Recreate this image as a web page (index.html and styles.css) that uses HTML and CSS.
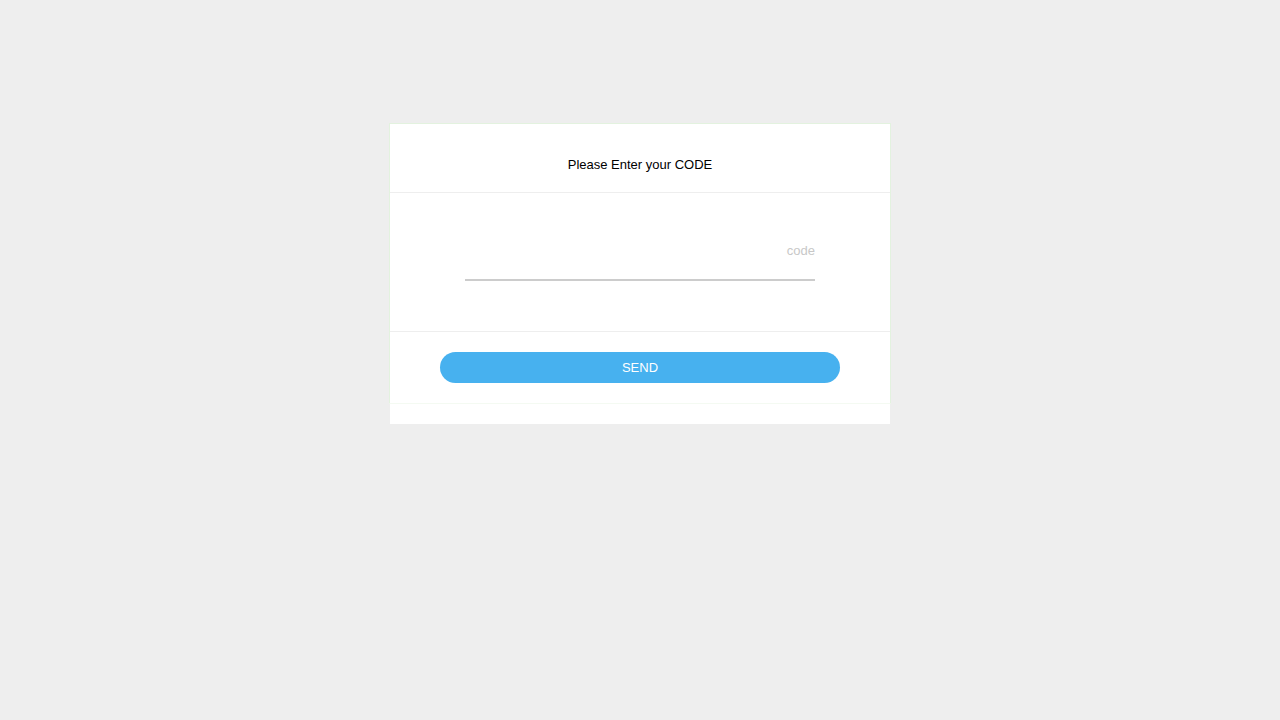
FILE: index.html
```html
<!DOCTYPE html>
<html>
<head>
<meta charset="utf-8">
<link rel="stylesheet" href="styles.css">
</head>
<body>
<div class="page">
  <div class="card">
    <div class="panel">
      <div class="head">Please Enter your CODE</div>
      <div class="body">
        <input class="code" type="text" placeholder="code">
      </div>
      <div class="foot">
        <button class="send">SEND</button>
      </div>
    </div>
  </div>
</div>
</body>
</html>
```
FILE: styles.css
```css
html, body {
  margin: 0;
  padding: 0;
  background: #eeeeee;
  font-family: "Liberation Sans", Arial, sans-serif;
}
.page {
  display: flex;
  justify-content: center;
  padding-top: 123px;
}
.card {
  width: 500px;
  height: 301px;
  background: #ffffff;
  box-sizing: border-box;
}
.panel {
  margin: 0 -1px;
  border: 1px solid #e3f2df;
  border-bottom-color: #f4faf2;
  height: 281px;
  box-sizing: border-box;
  display: flex;
  flex-direction: column;
  background: #ffffff;
}
.head {
  height: 69px;
  box-sizing: border-box;
  border-bottom: 1px solid #eeeeee;
  font-size: 13px;
  color: #000;
  text-align: center;
  padding-top: 33px;
}
.body {
  height: 139px;
  box-sizing: border-box;
  border-bottom: 1px solid #eeeeee;
  display: flex;
  justify-content: center;
  padding-top: 42px;
}
.code {
  width: 350px;
  height: 46px;
  box-sizing: border-box;
  border: none;
  border-bottom: 2px solid #cccccc;
  outline: none;
  text-align: right;
  font-family: "Liberation Sans", Arial, sans-serif;
  font-size: 13px;
  padding: 0 0 14px 0;
  background: transparent;
}
.code::placeholder {
  color: #c8c8c8;
}
.foot {
  display: flex;
  justify-content: center;
  padding-top: 20px;
}
.send {
  width: 400px;
  height: 31px;
  border: none;
  border-radius: 16px;
  background: #47b1ef;
  color: #ffffff;
  font-family: "Liberation Sans", Arial, sans-serif;
  font-size: 13px;
  padding: 0;
}
```
